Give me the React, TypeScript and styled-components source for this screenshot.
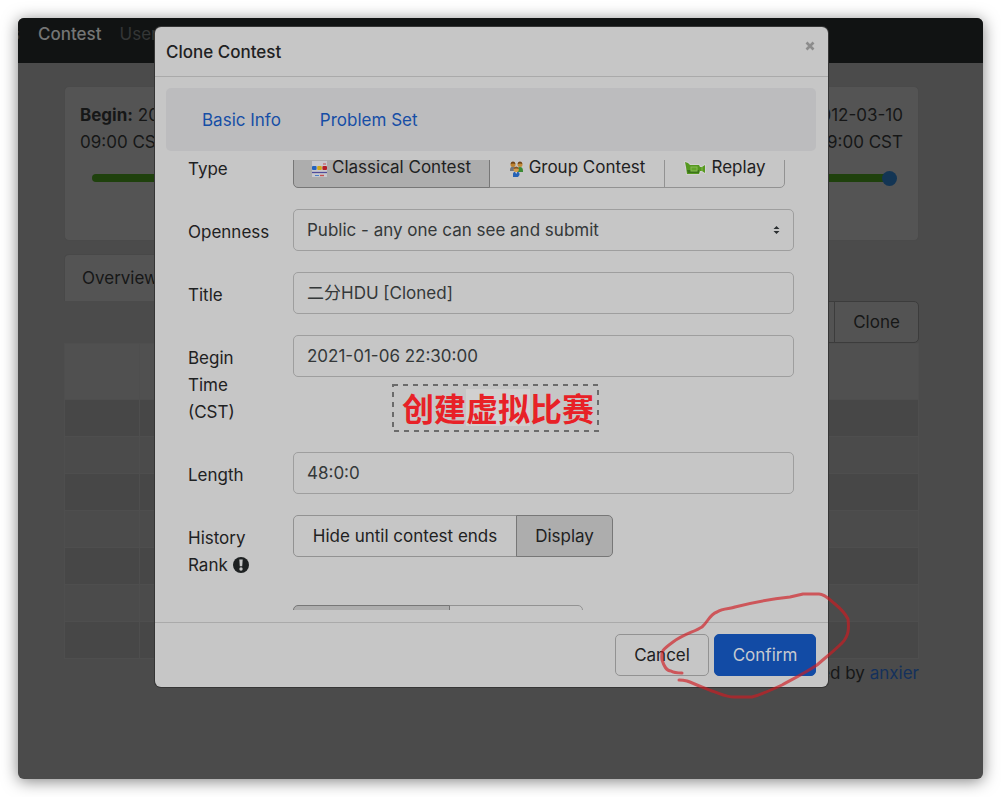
import React from 'react';
import styled, { createGlobalStyle } from 'styled-components';

const GlobalStyle = createGlobalStyle`
  * { box-sizing: border-box; }
  body {
    margin: 0;
    background: #fff;
    color: #1e2122;
    font-family: Inter, "Noto Sans CJK SC", sans-serif;
    font-size: 17px;
    line-height: 27px;
  }
  button, input, select { font: inherit; color: inherit; margin: 0; }
  a { text-decoration: none; }
`;

const Frame = styled.div`
  position: relative;
  margin: 18px;
  min-height: calc(100vh - 36px);
  border-radius: 6px;
  background: #4b4b4b;
  box-shadow: 0 2px 16px rgba(0, 0, 0, 0.5);
`;

const NavBar = styled.nav`
  display: flex;
  gap: 18px;
  height: 45px;
  padding-top: 3px;
  overflow: hidden;
  border-radius: 6px 6px 0 0;
  background: #111313;
`;

const NavLink = styled.a<{ $active?: boolean }>`
  color: ${(p) => (p.$active ? '#747575' : '#343636')};
  font-weight: ${(p) => (p.$active ? 500 : 400)};
`;

const NavEdge = styled.div`
  display: flex;
  justify-content: flex-end;
  flex: none;
  width: 2px;
  overflow: hidden;
`;

const Page = styled.main`
  padding: 23px 64px 0 46px;
  color: #161717;
`;

const Card = styled.section`
  height: 155px;
  padding: 15px;
  border: 1px solid #4a4a4a;
  border-radius: 5px;
  background: #545454;
`;

const CardTimes = styled.div`
  display: flex;
  justify-content: space-between;
`;

const TimeText = styled.div<{ $end?: boolean }>`
  text-align: ${(p) => (p.$end ? 'right' : 'left')};
`;

const Track = styled.div`
  display: flex;
  align-items: center;
  justify-content: flex-end;
  height: 8px;
  margin: 18px 12px 0;
  border-radius: 4px;
  background: #1f410d;
`;

const Knob = styled.span`
  width: 15px;
  height: 15px;
  margin-right: -6px;
  border-radius: 50%;
  background: #133554;
`;

const Tab = styled.button`
  display: block;
  height: 47px;
  margin-top: 13px;
  padding: 0 17px;
  border: 1px solid #484848;
  border-bottom: 0;
  border-radius: 5px 5px 0 0;
  background: #545454;
`;

const Toolbar = styled.div`
  display: flex;
  justify-content: flex-end;
`;

const ToolButton = styled.button`
  height: 42px;
  min-width: 85px;
  padding: 0;
  margin-left: -1px;
  border: 1px solid #3c3c3c;
  background: #535353;
  &:last-child { border-radius: 0 5px 5px 0; }
`;

const RankTable = styled.table`
  width: 100%;
  border-collapse: collapse;
  th { height: 56px; background: #505050; }
  td { height: 37px; }
  th, td { padding: 0; border: 1px solid #4e4e4e; }
  th:first-child { width: 75px; }
  tbody tr:nth-child(odd) { background: #474747; }
`;

const Credit = styled.footer`
  margin-top: 1px;
  text-align: right;
  a { color: #14315c; }
`;

const Overlay = styled.div`
  position: absolute;
  inset: 9px 18px auto 0;
  display: flex;
  justify-content: center;
`;

const Dialog = styled.section`
  position: relative;
  width: 70%;
  min-width: 673px;
  border-radius: 6px;
  background: #c6c6c6;
  box-shadow: 0 0 0 1px #353535;
`;

const DialogHeader = styled.header`
  display: flex;
  justify-content: space-between;
  align-items: flex-start;
  padding: 12px 11px 10px;
  border-bottom: 1px solid #aaaaaa;
`;

const DialogTitle = styled.h1`
  margin: 0;
  font-size: 17px;
  font-weight: 500;
`;

const CloseButton = styled.button`
  display: flex;
  padding: 2px;
  border: 0;
  background: none;
`;

const DialogBody = styled.div`
  padding: 11px 12px 12px 11px;
`;

const TabBar = styled.nav`
  display: flex;
  gap: 39px;
  padding: 19px 36px 17px;
  border-radius: 5px;
  background: #bcbcbe;
  a { color: #164ea6; }
`;

const ScrollArea = styled.div`
  height: 450px;
  margin-top: 9px;
  overflow: hidden;
`;

const Form = styled.form`
  display: grid;
  gap: 21px;
  margin-top: -14px;
  padding: 0 22px;
`;

const Row = styled.div`
  display: grid;
  grid-template-columns: 83px 1fr;
  column-gap: 22px;
  align-items: start;
`;

const RowLabel = styled.label`
  padding: 10px 0 5px;
  svg { vertical-align: -2px; }
`;

const field = `
  width: 100%;
  height: 42px;
  padding: 0 13px;
  border: 1px solid #9e9e9e;
  border-radius: 5px;
  background: transparent;
  color: #343839;
  outline: none;
`;

const TextField = styled.input<{ $cjk?: boolean }>`
  ${field}
  padding-bottom: ${(p) => (p.$cjk ? 3 : 0)}px;
`;

const SelectBox = styled.div`
  display: grid;
  align-items: center;
  > * { grid-area: 1 / 1; }
  svg { justify-self: end; margin-right: 14px; pointer-events: none; }
`;

const Select = styled.select`
  ${field}
  appearance: none;
`;

const Group = styled.div`
  display: flex;
`;

const GroupButton = styled.button<{ $on?: boolean; $width: number }>`
  position: relative;
  z-index: ${(p) => (p.$on ? 1 : 0)};
  display: flex;
  align-items: center;
  justify-content: center;
  gap: 5px;
  min-width: ${(p) => p.$width}px;
  height: 42px;
  padding: 0;
  white-space: nowrap;
  border: 1px solid ${(p) => (p.$on ? '#777777' : '#929292')};
  background: ${(p) => (p.$on ? '#adadad' : 'transparent')};
  & + & { margin-left: -1px; }
  &:first-child { border-radius: 5px 0 0 5px; }
  &:last-child { border-radius: 0 5px 5px 0; }
  svg { margin-top: 3px; }
`;

const DialogFooter = styled.footer`
  display: flex;
  justify-content: flex-end;
  gap: 5px;
  padding: 11px 12px 11px;
  border-top: 1px solid #aaaaaa;
`;

const ActionButton = styled.button<{ $primary?: boolean }>`
  height: 42px;
  min-width: ${(p) => (p.$primary ? 102 : 94)}px;
  padding: 0;
  border: 1px solid ${(p) => (p.$primary ? '#124ba5' : '#929292')};
  border-radius: 5px;
  background: ${(p) => (p.$primary ? '#124ba5' : 'transparent')};
  color: ${(p) => (p.$primary ? '#c6cad0' : '#1e2122')};
`;

const Note = styled.div`
  position: absolute;
  left: 237px;
  top: 357px;
  padding: 0 5px 2px 10px;
  color: #e82127;
  font-family: "Noto Sans CJK SC", sans-serif;
  font-size: 32px;
  font-weight: 700;
  line-height: 46px;
  white-space: nowrap;
  svg { position: absolute; left: 0; top: 0; width: 100%; height: 100%; }
`;

const Highlight = styled.span`
  background: linear-gradient(#d1d0d0, #d1d0d0) center / 100% 37px no-repeat;
`;

const Scribble = styled.svg`
  position: absolute;
  right: -24px;
  bottom: -14px;
  z-index: 2;
  pointer-events: none;
`;

const StageIcon = () => (
  <svg width="15" height="16" viewBox="0 0 15 16">
    <rect width="15" height="16" fill="#c9c9ce" />
    <rect x="0" y="5" width="4.600" height="4" rx="1" fill="#2462bd" />
    <rect x="5.200" y="5" width="4.600" height="4" rx="1" fill="#d0a71b" />
    <rect x="10.400" y="5" width="4.600" height="4" rx="1" fill="#b51f26" />
    <path d="M0 11.500H15" stroke="#514d99" strokeWidth="1.300" />
    <path d="M3 14.500H7" stroke="#4b7fc8" />
    <path d="M8 14.500H12" stroke="#c54f4e" strokeWidth="1.400" />
    <path d="M11 2H14V4H11Z" fill="#c88a90" />
  </svg>
);

const PeopleIcon = () => (
  <svg width="15" height="16" viewBox="0 0 15 16">
    <path d="M1 9Q1 5.500 4 5.500T7 9V10H1Z" fill="#71747b" />
    <path d="M8 10Q8 6 11 6T14 10V11H8Z" fill="#3c8a34" />
    <circle cx="4" cy="3.500" r="2.500" fill="#bd812f" />
    <circle cx="11" cy="3.500" r="2.500" fill="#c28a37" />
    <path d="M1.600 3Q2 .6 4 .6T6.400 3Q4 1.800 1.600 3M8.600 3Q9 .6 11 .6T13.400 3Q11 1.800 8.600 3" fill="#714315" />
    <path d="M4 16V13Q4 10.500 7.200 10.500T10.500 13V14L9 16Z" fill="#2562b5" />
    <circle cx="7.200" cy="8.500" r="2.600" fill="#d39a4c" />
    <path d="M4.500 8Q5 5.500 7.200 5.500T10 8Q7 6.800 4.500 8" fill="#8a5520" />
    <path d="M6.200 11L7.200 13 8.200 11Z" fill="#d9d9d9" />
  </svg>
);

const CameraIcon = () => (
  <svg width="23" height="15" viewBox="0 0 23 15">
    <path d="M1 1L4 2 6 4H15L16 6H18L21 4V12L18 10H16L15 13H3L2 6Z" fill="#549323" stroke="#d2d2d2" strokeWidth="2" strokeLinejoin="round" />
    <path d="M1 1L4 2 6 4H15L16 6H18L21 4V12L18 10H16L15 13H3L2 6Z" fill="#559820" />
    <path d="M3 9H15V12H4Z" fill="#3c7419" />
    <rect x="7" y="6" width="6" height="4" fill="#62a52a" stroke="#88ba55" />
    <path d="M18 6V10" stroke="#82b94a" />
  </svg>
);

const AlertIcon = () => (
  <svg width="16" height="16" viewBox="0 0 16 16">
    <circle cx="8" cy="8" r="8" fill="#1e2122" />
    <path d="M6.300 2.500H9.700L9.200 9.200H6.800Z" fill="#c6c6c6" />
    <circle cx="8" cy="12" r="1.700" fill="#c6c6c6" />
  </svg>
);

export default function App() {
  return (
    <>
      <GlobalStyle />
      <Frame>
        <NavBar>
          <NavEdge><NavLink href="#status">Status</NavLink></NavEdge>
          <NavLink href="#contest" $active>Contest</NavLink>
          <NavLink href="#user">User</NavLink>
        </NavBar>
        <Page>
          <Card>
            <CardTimes>
              <TimeText><b>Begin:</b> 2012-03-10<br />09:00 CST</TimeText>
              <TimeText $end><b>End:</b> 2012-03-10<br />09:00 CST</TimeText>
            </CardTimes>
            <Track><Knob /></Track>
          </Card>
          <Tab type="button">Overview</Tab>
          <Toolbar>
            <ToolButton type="button" aria-label="Update" />
            <ToolButton type="button">Clone</ToolButton>
          </Toolbar>
          <RankTable>
            <thead><tr><th /><th /></tr></thead>
            <tbody>
              {Array.from({ length: 7 }, (_, i) => (
                <tr key={i}><td /><td /></tr>
              ))}
            </tbody>
          </RankTable>
          <Credit>Powered by <a href="#anxier">anxier</a></Credit>
        </Page>

        <Overlay>
          <Dialog role="dialog" aria-labelledby="dialog-title">
            <DialogHeader>
              <DialogTitle id="dialog-title">Clone Contest</DialogTitle>
              <CloseButton type="button" aria-label="Close">
                <svg width="10" height="10" viewBox="0 0 10 10">
                  <path d="M1.500 1.500L8.500 8.500M8.500 1.500L1.500 8.500" stroke="#8c8c8c" strokeWidth="2.600" />
                </svg>
              </CloseButton>
            </DialogHeader>
            <DialogBody>
              <TabBar>
                <a href="#basic">Basic Info</a>
                <a href="#problems">Problem Set</a>
              </TabBar>
              <ScrollArea>
                <Form>
                  <Row>
                    <RowLabel as="span">Type</RowLabel>
                    <Group>
                      <GroupButton type="button" $on $width={197}><StageIcon />Classical Contest</GroupButton>
                      <GroupButton type="button" $width={176}><PeopleIcon />Group Contest</GroupButton>
                      <GroupButton type="button" $width={121}><CameraIcon />Replay</GroupButton>
                    </Group>
                  </Row>
                  <Row>
                    <RowLabel htmlFor="openness">Openness</RowLabel>
                    <SelectBox>
                      <Select id="openness">
                        <option>Public - any one can see and submit</option>
                      </Select>
                      <svg width="7" height="8" viewBox="0 0 7 8">
                        <path d="M.5 3L3.500 0 6.500 3ZM.5 5L3.500 8 6.500 5Z" fill="#2b2f31" />
                      </svg>
                    </SelectBox>
                  </Row>
                  <Row>
                    <RowLabel htmlFor="title">Title</RowLabel>
                    <TextField id="title" $cjk defaultValue="二分HDU [Cloned]" />
                  </Row>
                  <Row>
                    <RowLabel htmlFor="begin">Begin<br />Time<br />(CST)</RowLabel>
                    <TextField id="begin" defaultValue="2021-01-06 22:30:00" />
                  </Row>
                  <Row>
                    <RowLabel htmlFor="length">Length</RowLabel>
                    <TextField id="length" defaultValue="48:0:0" />
                  </Row>
                  <Row>
                    <RowLabel as="span">History<br />Rank <AlertIcon /></RowLabel>
                    <Group>
                      <GroupButton type="button" $width={224}>Hide until contest ends</GroupButton>
                      <GroupButton type="button" $on $width={97}>Display</GroupButton>
                    </Group>
                  </Row>
                  <Row>
                    <span />
                    <Group>
                      <GroupButton type="button" $on $width={157} aria-label="Show" />
                      <GroupButton type="button" $width={134} aria-label="Hide" />
                    </Group>
                  </Row>
                </Form>
              </ScrollArea>
            </DialogBody>
            <DialogFooter>
              <ActionButton type="button">Cancel</ActionButton>
              <ActionButton type="button" $primary>Confirm</ActionButton>
            </DialogFooter>

            <Note>
              <svg>
                <rect x="1" y="1" width="205" height="46" fill="none" stroke="#6b6b6b" strokeWidth="2" strokeDasharray="5 5" />
              </svg>
              创建<Highlight>虚拟</Highlight>比赛
            </Note>
            <Scribble width="192" height="111" viewBox="660 590 192 111">
              <path
                d="M682 673Q674 673 671 671C666 671 664 666 662 660C661 651 662 650 673 642C684 634 694 632 702 627C708 622 709 615 717 612C723 608 730 609 735 607C754 602 772 599 790 597L803 594H819C825 594 830 600 835 604C841 609 845 613 848 619C849 628 849 636 842 643C835 650 825 658 817 665C805 673 793 679 782 685C769 691 760 695 752 697H734C726 697 719 693 712 691C702 687 695 684 687 681Q683 680 679 680"
                fill="none"
                stroke="#d01c22"
                strokeOpacity="0.66"
                strokeWidth="3"
                strokeLinecap="round"
                strokeLinejoin="round"
              />
            </Scribble>
          </Dialog>
        </Overlay>
      </Frame>
    </>
  );
}
